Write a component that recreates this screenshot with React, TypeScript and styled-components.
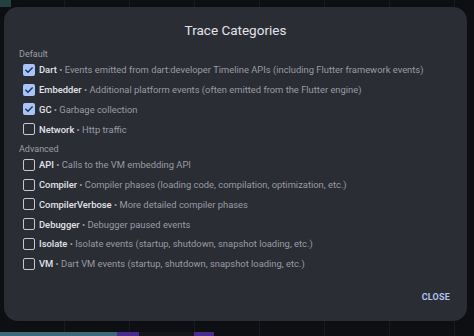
import React from "react";
import styled, { createGlobalStyle } from "styled-components";

const Global = createGlobalStyle`
  html, body { margin: 0; padding: 0; background: #0e0f13; }
  body { font-family: Roboto, "Noto Sans", "Liberation Sans", sans-serif; -webkit-font-smoothing: antialiased; }
`;

const Backdrop = styled.div`
  position: relative;
  width: 474px;
  height: 336px;
  overflow: hidden;
  background-color: #0e0f13;
  background-image: repeating-linear-gradient(
    90deg,
    transparent 0px,
    transparent 64px,
    #1a1b21 64px,
    #1a1b21 65px
  );
  display: flex;
  flex-direction: column;
  justify-content: space-between;
`;

const TopChip = styled.div`
  width: 11px;
  height: 7px;
  background: #24403f;
`;

const Track = styled.div`
  display: flex;
  height: 4px;
`;

const Seg = styled.div<{ $w: number; $c: string }>`
  width: ${(p) => p.$w}px;
  background: ${(p) => p.$c};
`;

const Dialog = styled.div`
  position: absolute;
  left: 4px;
  top: 7px;
  width: 463px;
  height: 314px;
  box-sizing: border-box;
  border-radius: 14px;
  background: #2b2d35;
  padding: 13px 15px 10px 15px;
  display: flex;
  flex-direction: column;
`;

const Title = styled.div`
  text-align: center;
  font-size: 13.5px;
  line-height: 20px;
  color: #e3e3ea;
  margin-bottom: 4px;
`;

const SectionLabel = styled.div`
  font-size: 9px;
  line-height: 12px;
  padding-top: 4px;
  color: #9c9da5;
`;

const Row = styled.div`
  display: flex;
  align-items: center;
  height: 19.75px;
  padding-left: 4px;
  gap: 4px;
  font-size: 9.4px;
  white-space: nowrap;
`;

const Box = styled.div<{ $checked: boolean }>`
  width: 12px;
  height: 12px;
  box-sizing: border-box;
  border-radius: 2px;
  border: ${(p) => (p.$checked ? "none" : "1.5px solid #c6c7d0")};
  background: ${(p) => (p.$checked ? "#aac4f8" : "transparent")};
  display: flex;
  align-items: center;
  justify-content: center;
  flex: none;
`;

const Name = styled.span`
  color: #e2e3ea;
  font-weight: 500;
`;

const Desc = styled.span`
  color: #9a9ba4;
`;

const Spacer = styled.div`
  flex: 1;
`;

const Footer = styled.div`
  display: flex;
  justify-content: flex-end;
`;

const CloseButton = styled.button`
  background: none;
  border: none;
  font-family: inherit;
  font-size: 9px;
  font-weight: 700;
  letter-spacing: 0.2px;
  color: #afc2ee;
  height: 28px;
  padding: 0 2px;
  cursor: pointer;
`;

type Cat = { name: string; desc: string; checked: boolean };

const defaults: Cat[] = [
  { name: "Dart", desc: "Events emitted from dart:developer Timeline APIs (including Flutter framework events)", checked: true },
  { name: "Embedder", desc: "Additional platform events (often emitted from the Flutter engine)", checked: true },
  { name: "GC", desc: "Garbage collection", checked: true },
  { name: "Network", desc: "Http traffic", checked: false },
];

const advanced: Cat[] = [
  { name: "API", desc: "Calls to the VM embedding API", checked: false },
  { name: "Compiler", desc: "Compiler phases (loading code, compilation, optimization, etc.)", checked: false },
  { name: "CompilerVerbose", desc: "More detailed compiler phases", checked: false },
  { name: "Debugger", desc: "Debugger paused events", checked: false },
  { name: "Isolate", desc: "Isolate events (startup, shutdown, snapshot loading, etc.)", checked: false },
  { name: "VM", desc: "Dart VM events (startup, shutdown, snapshot loading, etc.)", checked: false },
];

const Check = () => (
  <svg width="10" height="10" viewBox="0 0 24 24">
    <path d="M4.5 12.5l5 5L19.5 7" fill="none" stroke="#12305f" strokeWidth="3.2" strokeLinecap="square" />
  </svg>
);

const CatRow = ({ c }: { c: Cat }) => (
  <Row>
    <Box $checked={c.checked}>{c.checked && <Check />}</Box>
    <span>
      <Name>{c.name}</Name>
      <Desc> • {c.desc}</Desc>
    </span>
  </Row>
);

export default function App() {
  return (
    <>
      <Global />
      <Backdrop>
        <TopChip />
        <Track>
          <Seg $w={117} $c="#3d6a78" />
          <Seg $w={22} $c="#4a2a8a" />
          <Seg $w={55} $c="#15161b" />
          <Seg $w={20} $c="#4a2a8a" />
        </Track>
        <Dialog>
          <Title>Trace Categories</Title>
          <SectionLabel>Default</SectionLabel>
          {defaults.map((c) => (
            <CatRow key={c.name} c={c} />
          ))}
          <SectionLabel>Advanced</SectionLabel>
          {advanced.map((c) => (
            <CatRow key={c.name} c={c} />
          ))}
          <Spacer />
          <Footer>
            <CloseButton>CLOSE</CloseButton>
          </Footer>
        </Dialog>
      </Backdrop>
    </>
  );
}
